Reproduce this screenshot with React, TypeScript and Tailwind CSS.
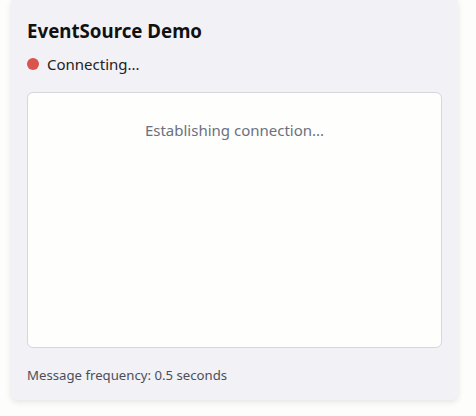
export default function App() {
  return (
    <div className="min-h-[416px] w-[476px] bg-[#fdfdfb] pl-[11px]" style={{ fontFamily: '"Noto Sans", sans-serif' }}>
      <div className="w-[447px] h-[400px] bg-[#f1f1f6] rounded-b-md shadow-[0_2px_6px_rgba(0,0,0,0.10)] px-4 pt-[17px] flex flex-col">
        <h1 className="text-[18.7px] leading-[28px] font-bold text-[#111]">EventSource Demo</h1>
        <div className="mt-[7px] flex items-center gap-2 h-[24px]">
          <span className="w-3 h-3 rounded-full bg-[#d9534f]" />
          <span className="text-[15px] text-[#222]">Connecting...</span>
        </div>
        <div className="mt-[16px] h-[256px] bg-[#fefefc] border border-[#d6d6dc] rounded-md flex flex-col items-center pt-[25px]">
          <span className="text-[15px] leading-[24px] text-[#6b7080]">Establishing connection...</span>
        </div>
        <div className="mt-[17px] text-[13.2px] leading-[20px] text-[#4b4f58]">Message frequency: 0.5 seconds</div>
      </div>
    </div>
  );
}
